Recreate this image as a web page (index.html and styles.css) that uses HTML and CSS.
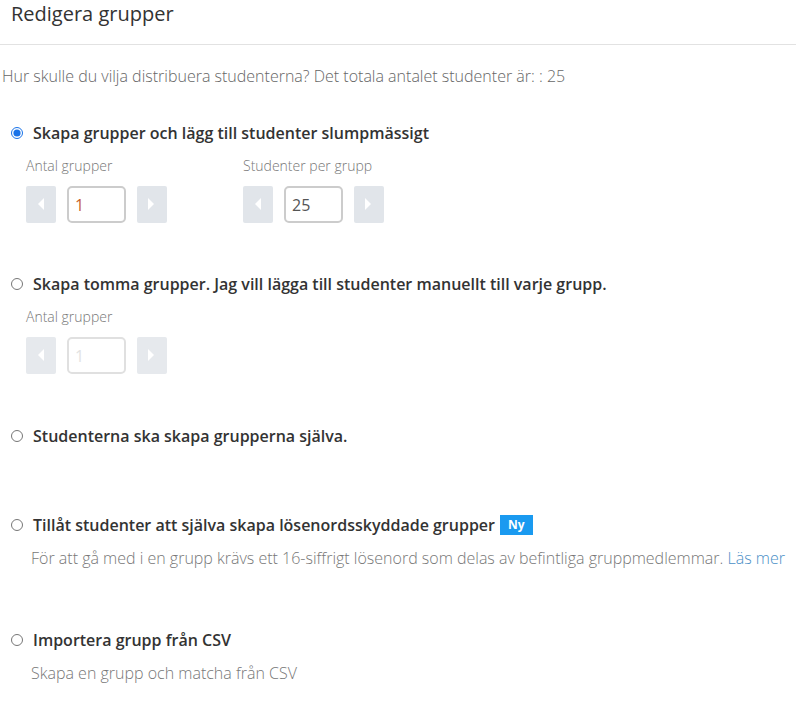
FILE: index.html
```html
<!DOCTYPE html>
<html lang="sv">
<head>
<meta charset="UTF-8">
<title>Redigera grupper</title>
<link rel="stylesheet" href="styles.css">
</head>
<body>
    <div class="header">
        <h1>Redigera grupper</h1>
    </div>
    <p class="intro">Hur skulle du vilja distribuera studenterna? Det totala antalet studenter är: : 25</p>

    <div class="option opt-random">
        <label class="opt-label"><input type="radio" name="mode" checked> Skapa grupper och lägg till studenter slumpmässigt</label>
        <div class="fields">
            <div class="field">
                <div class="field-title">Antal grupper</div>
                <div class="spinner">
                    <button class="arrow left"></button>
                    <input type="text" class="num orange" value="1">
                    <button class="arrow right"></button>
                </div>
            </div>
            <div class="field">
                <div class="field-title">Studenter per grupp</div>
                <div class="spinner">
                    <button class="arrow left"></button>
                    <input type="text" class="num" value="25">
                    <button class="arrow right"></button>
                </div>
            </div>
        </div>
    </div>

    <div class="option opt-empty">
        <label class="opt-label"><input type="radio" name="mode"> Skapa tomma grupper. Jag vill lägga till studenter manuellt till varje grupp.</label>
        <div class="fields">
            <div class="field">
                <div class="field-title">Antal grupper</div>
                <div class="spinner disabled">
                    <button class="arrow left"></button>
                    <input type="text" class="num" value="1" disabled>
                    <button class="arrow right"></button>
                </div>
            </div>
        </div>
    </div>

    <div class="option opt-self">
        <label class="opt-label"><input type="radio" name="mode"> Studenterna ska skapa grupperna själva.</label>
    </div>

    <div class="option opt-password">
        <label class="opt-label"><input type="radio" name="mode"> Tillåt studenter att själva skapa lösenordsskyddade grupper <span class="badge">Ny</span></label>
        <p class="desc">För att gå med i en grupp krävs ett 16-siffrigt lösenord som delas av befintliga gruppmedlemmar. <a href="#">Läs mer</a></p>
    </div>

    <div class="option opt-csv">
        <label class="opt-label"><input type="radio" name="mode"> Importera grupp från CSV</label>
        <p class="desc">Skapa en grupp och matcha från CSV</p>
    </div>
</body>
</html>
```

FILE: styles.css
```css
body{
    margin: 0;
    font-family: "Open Sans", sans-serif;
    color: #333;
    background: #fff;
}
.header{
    height: 44px;
    border-bottom: 1px solid #e2e2e2;
}
h1{
    margin: 0;
    padding: 0 0 0 11px;
    font-size: 20px;
    font-weight: 400;
    line-height: 28px;
    color: #333;
}
.intro{
    margin: 20px 0 0 2px;
    font-size: 16px;
    font-weight: 300;
    line-height: 22px;
    color: #666;
}
.option{
    margin-left: 11px;
}
.opt-random{ margin-top: 35px; }
.opt-empty{ margin-top: 50px; }
.opt-self{ margin-top: 51px; }
.opt-password{ margin-top: 67px; }
.opt-csv{ margin-top: 60px; }

.opt-label{
    display: flex;
    align-items: center;
    font-size: 16px;
    font-weight: 600;
    line-height: 22px;
    color: #333;
}
.opt-label input{
    margin: 0 10px 0 0;
    width: 12px;
    height: 12px;
    accent-color: #1a73e8;
}
.badge{
    display: inline-block;
    margin-left: 5px;
    padding: 0 8px;
    background: #1a9af0;
    color: #fff;
    font-size: 12px;
    font-weight: 700;
    line-height: 20px;
}
.fields{
    display: flex;
    gap: 76px;
    margin: 12px 0 0 15px;
}
.field-title{
    font-size: 14px;
    font-weight: 300;
    color: #777;
    line-height: 20px;
}
.spinner{
    display: flex;
    gap: 11px;
    margin-top: 10px;
}
.arrow{
    position: relative;
    width: 30px;
    height: 37px;
    border: none;
    border-radius: 2px;
    background: #e1e5ea;
    padding: 0;
}
.arrow::after{
    content: "";
    position: absolute;
    top: 12px;
    border-top: 6px solid transparent;
    border-bottom: 6px solid transparent;
}
.left::after{
    left: 12px;
    border-right: 6px solid #fff;
}
.right::after{
    left: 11px;
    border-left: 6px solid #fff;
}
.num{
    box-sizing: border-box;
    width: 59px;
    height: 37px;
    border: 2px solid #ccc;
    border-radius: 5px;
    padding: 0 6px;
    font-family: "Open Sans", sans-serif;
    font-size: 16px;
    font-weight: 400;
    color: #555;
    background: #fff;
}
.num.orange{ color: #c8622e; }
.disabled .arrow{ background: #e6e9ed; }
.disabled .num{
    border-color: #e0e0e0;
    color: #e2e2e2;
}
.desc{
    margin: 11px 0 0 20px;
    font-size: 16px;
    font-weight: 300;
    line-height: 22px;
    color: #777;
}
.desc a{
    color: #4a8fc7;
    text-decoration: none;
}
```
